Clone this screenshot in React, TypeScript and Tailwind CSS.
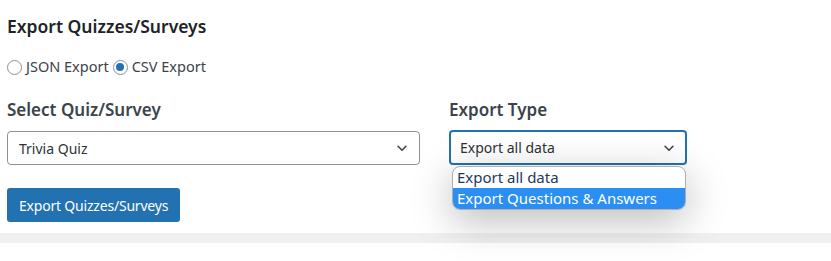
import React, { useState } from "react";

const font = "font-['Segoe_UI','Noto_Sans','Open_Sans',sans-serif]";

const Chevron = () => (
  <svg width="14" height="14" viewBox="0 0 16 16" fill="none" stroke="#3c434a" strokeWidth="1.8" strokeLinecap="round" strokeLinejoin="round">
    <path d="M3.5 6l4.5 4.5L12.5 6" />
  </svg>
);

const Radio = ({ checked, label, onClick }: { checked: boolean; label: string; onClick: () => void }) => (
  <label className="flex items-center gap-[4px] cursor-pointer" onClick={onClick}>
    <span className="w-[15px] h-[15px] rounded-full border border-[#8c8f94] bg-white flex items-center justify-center">
      {checked && <span className="w-[8px] h-[8px] rounded-full bg-[#2271b1]" />}
    </span>
    <span className="text-[14.5px] text-[#3c434a]">{label}</span>
  </label>
);

export default function App() {
  const [format, setFormat] = useState<"json" | "csv">("csv");

  return (
    <div className={`w-[831px] h-[261px] bg-white ${font}`}>
      <div className="px-[7px] pt-[14px] h-[233px]">
        <h2 className="text-[17.5px] font-semibold text-[#1d2327] leading-[24px]">Export Quizzes/Surveys</h2>

        <div className="flex items-center gap-[4px] mt-[19px] h-[20px]">
          <Radio checked={format === "json"} label="JSON Export" onClick={() => setFormat("json")} />
          <Radio checked={format === "csv"} label="CSV Export" onClick={() => setFormat("csv")} />
        </div>

        <div className="flex gap-[29px] mt-[21px]">
          {/* Quiz selector */}
          <div className="w-[413px]">
            <div className="text-[17px] font-semibold text-[#3c434a] leading-[24px]">Select Quiz/Survey</div>
            <div className="mt-[9px] h-[34px] border border-[#8c8f94] rounded-[4px] flex items-center justify-between pl-[11px] pr-[10px]">
              <span className="text-[14px] text-[#2c3338]">Trivia Quiz</span>
              <Chevron />
            </div>
          </div>

          {/* Export type with open dropdown */}
          <div className="w-[238px] relative">
            <div className="text-[17px] font-semibold text-[#3c434a] leading-[24px]">Export Type</div>
            <div className="mt-[8px] h-[35px] border-[2px] border-[#2271b1] rounded-[4px] flex items-center justify-between pl-[9px] pr-[9px]">
              <span className="text-[14px] text-[#2c3338]">Export all data</span>
              <Chevron />
            </div>
            <div className="absolute left-[3px] top-[68px] w-[234px] bg-white border border-[#b0b0b0] rounded-[8px] overflow-hidden shadow-[0_10px_40px_rgba(0,0,0,0.28)] z-10">
              <div className="h-[21px] pl-[4px] text-[15px] leading-[21px] text-[#1d3a5c]">Export all data</div>
              <div className="h-[21px] pl-[4px] text-[15px] leading-[21px] text-white bg-[#2b8ef2]">Export Questions &amp; Answers</div>
            </div>
          </div>
        </div>

        <button className="mt-[23px] h-[34px] px-[12px] bg-[#2271b1] text-white rounded-[3px] text-[14px] tracking-[-0.2px]">
          Export Quizzes/Surveys
        </button>
      </div>
      <div className="h-[10px] bg-[#f0f0f1]" />
    </div>
  );
}
